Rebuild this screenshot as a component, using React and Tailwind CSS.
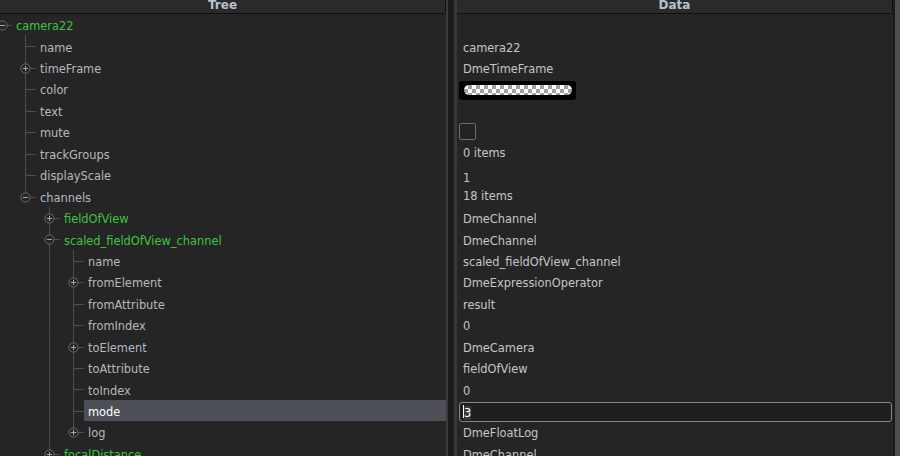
import React from "react";

const ROW_H = 21.45;

const rows = [
  { label: "camera22", d: 0, exp: "-", green: true, last: true, cont: [] },
  { label: "name", d: 1, cont: [] },
  { label: "timeFrame", d: 1, exp: "+", cont: [] },
  { label: "color", d: 1, cont: [] },
  { label: "text", d: 1, cont: [] },
  { label: "mute", d: 1, cont: [] },
  { label: "trackGroups", d: 1, cont: [] },
  { label: "displayScale", d: 1, cont: [] },
  { label: "channels", d: 1, exp: "-", last: true, cont: [] },
  { label: "fieldOfView", d: 2, exp: "+", green: true, cont: [] },
  { label: "scaled_fieldOfView_channel", d: 2, exp: "-", green: true, cont: [] },
  { label: "name", d: 3, cont: [2] },
  { label: "fromElement", d: 3, exp: "+", cont: [2] },
  { label: "fromAttribute", d: 3, cont: [2] },
  { label: "fromIndex", d: 3, cont: [2] },
  { label: "toElement", d: 3, exp: "+", cont: [2] },
  { label: "toAttribute", d: 3, cont: [2] },
  { label: "toIndex", d: 3, cont: [2] },
  { label: "mode", d: 3, selected: true, cont: [2] },
  { label: "log", d: 3, exp: "+", last: true, cont: [2] },
  { label: "focalDistance", d: 2, exp: "+", green: true, cont: [] },
];

const data = [
  null,
  { text: "camera22" },
  { text: "DmeTimeFrame" },
  { kind: "swatch" },
  null,
  { kind: "check" },
  { text: "0 items", cls: "translate-y-0" },
  { text: "1", cls: "translate-y-[4px] pl-[2px]" },
  { text: "18 items", cls: "translate-y-0" },
  { text: "DmeChannel" },
  { text: "DmeChannel" },
  { text: "scaled_fieldOfView_channel" },
  { text: "DmeExpressionOperator" },
  { text: "result" },
  { text: "0" },
  { text: "DmeCamera" },
  { text: "fieldOfView" },
  { text: "0" },
  { kind: "edit" },
  { text: "DmeFloatLog" },
  { text: "DmeChannel" },
];

const colX = (k) => (k === 0 ? 2.5 : 1.5 + 24 * k);

function Guides({ row }) {
  const w = 12 + 24 * row.d;
  const mid = Math.round(ROW_H / 2) + 0.5;
  const cx = colX(row.d);
  const line = "#4e4e4e";
  return (
    <svg width={w} height={ROW_H} className="shrink-0 block">
      {row.cont.map((k) => (
        <line key={k} x1={colX(k)} y1={0} x2={colX(k)} y2={ROW_H} stroke={line} />
      ))}
      {row.d > 0 && (
        <line x1={cx} y1={0} x2={cx} y2={row.last ? mid : ROW_H} stroke={line} />
      )}
      <line x1={cx} y1={mid} x2={w + 2} y2={mid} stroke={line} />
      {row.exp && (
        <g>
          <circle cx={cx} cy={mid} r={4.6} fill="#252525" stroke="#6c6c6c" />
          <line x1={cx - 2.6} y1={mid} x2={cx + 2.6} y2={mid} stroke="#a8a8a8" />
          {row.exp === "+" && (
            <line x1={cx} y1={mid - 2.6} x2={cx} y2={mid + 2.6} stroke="#a8a8a8" />
          )}
        </g>
      )}
    </svg>
  );
}

function Swatch() {
  return (
    <div className="w-[117px] h-[19px] bg-black rounded-[3px] flex items-center justify-center">
      <div
        className="w-[108px] h-[10px] rounded-full"
        style={{
          backgroundColor: "#ffffff",
          backgroundImage:
            "linear-gradient(45deg,#a0a0a0 25%,transparent 25%,transparent 75%,#a0a0a0 75%),linear-gradient(45deg,#a0a0a0 25%,transparent 25%,transparent 75%,#a0a0a0 75%)",
          backgroundSize: "8px 8px",
          backgroundPosition: "0 0,4px 4px",
        }}
      />
    </div>
  );
}

function DataCell({ item }) {
  if (!item) return null;
  if (item.kind === "swatch") return <div className="pl-[2px] translate-y-[1px]"><Swatch /></div>;
  if (item.kind === "check")
    return (
      <div className="pl-[2px]">
        <div className="w-[17px] h-[17px] border border-[#6e6e6e] rounded-[2px] bg-[#222]" />
      </div>
    );
  if (item.kind === "edit")
    return (
      <div className="ml-[2px] mr-[1px] flex-1 h-[20px] translate-y-[1px] border-[1.5px] border-[#7c8c8a] rounded-[3px] bg-[#1f1f1f] flex items-center pl-[3px]">
        <span className="w-px h-[13px] bg-white" />
        <span className="text-white bg-[#3a3a3a] leading-[14px] translate-y-[1px]">3</span>
      </div>
    );
  return (
    <span className={`pl-[6px] text-[#c6c6c6] ${item.cls || "translate-y-[2px]"}`}>{item.text}</span>
  );
}

export default function App() {
  return (
    <div
      className="w-[900px] h-[456px] overflow-hidden bg-[#252525] flex text-[11.4px]"
      style={{ fontFamily: '"DejaVu Sans", Verdana, sans-serif' }}
    >
      {/* Tree */}
      <div className="w-[446px] shrink-0 flex flex-col">
        <div className="h-[14px] shrink-0 bg-[#2a2a2a] border-b border-r border-[#111] overflow-hidden flex justify-center">
          <div className="-mt-[5px] leading-[20px] font-bold text-[12px] text-[#b6c2ce]">Tree</div>
        </div>
        <div className="flex flex-col">
          {rows.map((r, i) => (
            <div key={i} className="flex items-stretch h-[21.45px]">
              <Guides row={r} />
              <div
                className={`flex-1 flex items-center pl-[4px] ${
                  r.selected ? "bg-[#4c4f56] text-white" : r.green ? "text-[#3fc43f]" : "text-[#b6b8bf]"
                }`}
              >
                <span className="translate-y-[2px]">{r.label}</span>
              </div>
            </div>
          ))}
        </div>
      </div>

      {/* Splitter */}
      <div className="w-[11px] shrink-0 flex">
        <div className="w-[2px] bg-[#3a3a3a]" />
        <div className="flex-1 bg-[#1c1c1c]" />
        <div className="w-[3px] bg-[#383838]" />
      </div>

      {/* Data */}
      <div className="w-[436px] shrink-0 flex flex-col">
        <div className="h-[14px] shrink-0 bg-[#2a2a2a] border-b border-r border-[#111] overflow-hidden flex justify-center">
          <div className="-mt-[5px] leading-[20px] font-bold text-[12px] text-[#b6c2ce]">Data</div>
        </div>
        <div className="flex flex-col">
          {data.map((item, i) => (
            <div key={i} className="flex items-center h-[21.45px]">
              <DataCell item={item} />
            </div>
          ))}
        </div>
      </div>

      <div className="w-[2px] shrink-0 bg-[#1c1c1c]" />
      <div className="flex-1 bg-[#4e4e4e]" />
    </div>
  );
}
